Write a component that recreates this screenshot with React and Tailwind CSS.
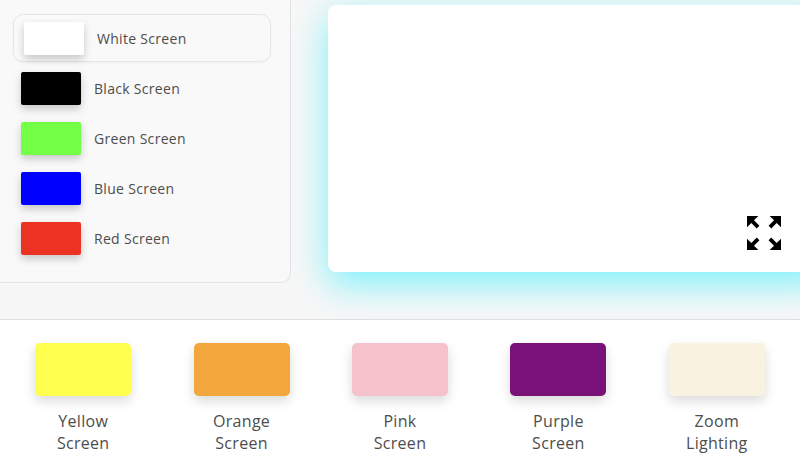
import React from "react";

const side = [
  { name: "White Screen", color: "bg-[#ffffff]", active: true },
  { name: "Black Screen", color: "bg-[#000000]" },
  { name: "Green Screen", color: "bg-[#72ff45]" },
  { name: "Blue Screen", color: "bg-[#0000ff]" },
  { name: "Red Screen", color: "bg-[#ec3323]" },
];

const bottom = [
  { l1: "Yellow", l2: "Screen", color: "bg-[#ffff4f]" },
  { l1: "Orange", l2: "Screen", color: "bg-[#f1a73c]" },
  { l1: "Pink", l2: "Screen", color: "bg-[#f5c2cb]" },
  { l1: "Purple", l2: "Screen", color: "bg-[#781279]" },
  { l1: "Zoom", l2: "Lighting", color: "bg-[#f9f2e1]" },
];

export default function App() {
  return (
    <div
      className="w-[800px] h-[470px] overflow-hidden bg-white text-[#4d4d4d]"
      style={{ fontFamily: '"Open Sans", "Noto Sans", sans-serif' }}
    >
      <div className="h-[320px] bg-[#f7f7f7] border-b border-[#e0e0e0] flex items-start">
        <div className="w-[291px] h-[283px] shrink-0 bg-[#f9f9f9] border-r border-b border-[#e3e3e3] rounded-br-[10px] pt-[13px] pl-[13px] pr-[19px]">
          {side.map((s) =>
            s.active ? (
              <div key={s.name} className="h-[50px] flex items-center">
                <div className="w-full h-[48px] border border-[#e6e6e6] rounded-[10px] flex items-center pl-[10px] shadow-[0_1px_3px_rgba(0,0,0,0.04)]">
                  <div className={`w-[60px] h-[33px] rounded-[2px] ${s.color} shadow-[0_4px_8px_rgba(0,0,0,0.2)]`} />
                  <span className="ml-[13px] text-[14px] tracking-[0.3px]">{s.name}</span>
                </div>
              </div>
            ) : (
              <div key={s.name} className="h-[50px] flex items-center pl-[8px]">
                <div className={`w-[60px] h-[33px] rounded-[2px] ${s.color} shadow-[0_4px_8px_rgba(0,0,0,0.2)]`} />
                <span className="ml-[13px] text-[14px] tracking-[0.3px]">{s.name}</span>
              </div>
            )
          )}
        </div>
        <div className="ml-[37px] mt-[5px] w-[500px] h-[267px] shrink-0 bg-white rounded-[8px] shadow-[0_12px_36px_rgba(0,238,255,0.5)] flex items-end justify-end pr-[47px] pb-[22px]">
          <svg width="34" height="34" viewBox="3 3 18 18" fill="#000">
            <path d="M15 3l2.3 2.3-2.89 2.87 1.42 1.42L18.7 6.7 21 9V3zM3 9l2.3-2.3 2.87 2.89 1.42-1.42L6.7 5.3 9 3H3zm6 12l-2.3-2.3 2.89-2.87-1.420-1.42L5.3 17.3 3 15v6zm12-6l-2.3 2.3-2.87-2.89-1.42 1.42 2.89 2.87L15 21h6z" />
          </svg>
        </div>
      </div>
      <div className="grid grid-cols-5 px-[4px] pt-[23px]">
        {bottom.map((b) => (
          <div key={b.l1} className="flex flex-col items-center">
            <div className={`w-[96px] h-[53px] rounded-[5px] ${b.color} shadow-[0_5px_12px_rgba(0,0,0,0.15)]`} />
            <div className="mt-[14px] text-[16px] leading-[22px] text-center tracking-[0.3px]">
              <div>{b.l1}</div>
              <div>{b.l2}</div>
            </div>
          </div>
        ))}
      </div>
    </div>
  );
}
